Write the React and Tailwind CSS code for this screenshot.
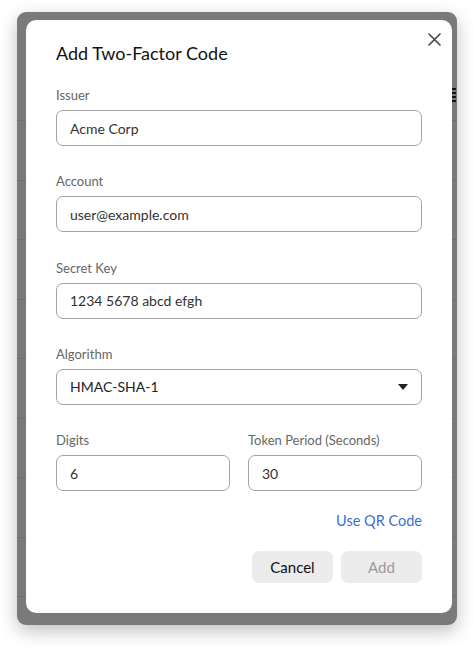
import React from "react";

const font = { fontFamily: "Lato, 'Liberation Sans', sans-serif" };

function Field({ label, value, className = "" }) {
  return (
    <div className={`flex flex-col ${className}`}>
      <label className="text-[13px] leading-5 text-[#666]">{label}</label>
      <div className="mt-[5px] h-9 rounded-[7px] border border-[#a3a3a3] pl-[13px] flex items-center text-[14px] text-[#333]">
        {value}
      </div>
    </div>
  );
}

export default function App() {
  const rows = Array.from({ length: 9 });
  return (
    <div className="w-[474px] h-[647px] bg-white overflow-hidden" style={font}>
      <div className="relative ml-[17px] mt-[12px] w-[440px] h-[613px] rounded-[9px] bg-[#7a7a7a] shadow-[0_6px_18px_rgba(0,0,0,0.25)] overflow-hidden">
        {/* dimmed list behind the dialog */}
        <div className="pt-[49.5px]">
          {rows.map((_, i) => (
            <div key={i} className="h-[59.5px] border-b border-[#6f6f6f]" />
          ))}
        </div>
        <div className="absolute right-[1px] top-[76px] flex flex-col gap-[2px]">
          <span className="block w-[4px] h-[2px] bg-[#111]" />
          <span className="block w-[4px] h-[2px] bg-[#111]" />
          <span className="block w-[4px] h-[2px] bg-[#111]" />
          <span className="block w-[4px] h-[2px] bg-[#111]" />
        </div>

        {/* dialog */}
        <div className="absolute left-[9px] top-[8px] w-[426px] h-[593px] rounded-[10px] bg-white px-[30px] pt-[19px] pb-[30px] flex flex-col">
          <button className="absolute right-[8px] top-[9px] w-5 h-5 flex items-center justify-center text-[#444]">
            <svg width="13" height="13" viewBox="0 0 13 13" fill="none" stroke="currentColor" strokeWidth="1.6" strokeLinecap="round">
              <path d="M1 1L12 12M12 1L1 12" />
            </svg>
          </button>

          <h2 className="text-[18px] leading-7 text-[#111]">Add Two-Factor Code</h2>

          <div className="mt-[18px] flex flex-col gap-[25.3px]">
            <Field label="Issuer" value="Acme Corp" />
            <Field label="Account" value="user@example.com" />
            <Field label="Secret Key" value="1234 5678 abcd efgh" />
            <div className="flex flex-col">
              <label className="text-[13px] leading-5 text-[#666]">Algorithm</label>
              <div className="mt-[5px] h-9 rounded-[7px] border border-[#a3a3a3] pl-[13px] pr-[13px] flex items-center justify-between text-[14px] text-[#222]">
                <span>HMAC-SHA-1</span>
                <svg width="10" height="6" viewBox="0 0 10 6">
                  <path d="M0 0H10L5 6Z" fill="#222" />
                </svg>
              </div>
            </div>
            <div className="flex gap-[18px]">
              <Field label="Digits" value="6" className="flex-1" />
              <Field label="Token Period (Seconds)" value="30" className="flex-1" />
            </div>
          </div>

          <div className="mt-[20px] flex justify-end">
            <button className="text-[14.5px] leading-5 text-[#3b6fd4]">Use QR Code</button>
          </div>

          <div className="mt-auto flex justify-end gap-2">
            <button className="w-[81px] h-8 rounded-[7px] bg-[#ececec] text-[15px] text-[#111]">Cancel</button>
            <button className="w-[81px] h-8 rounded-[7px] bg-[#ececec] text-[15px] text-[#9a9a9a]">Add</button>
          </div>
        </div>
      </div>
    </div>
  );
}
